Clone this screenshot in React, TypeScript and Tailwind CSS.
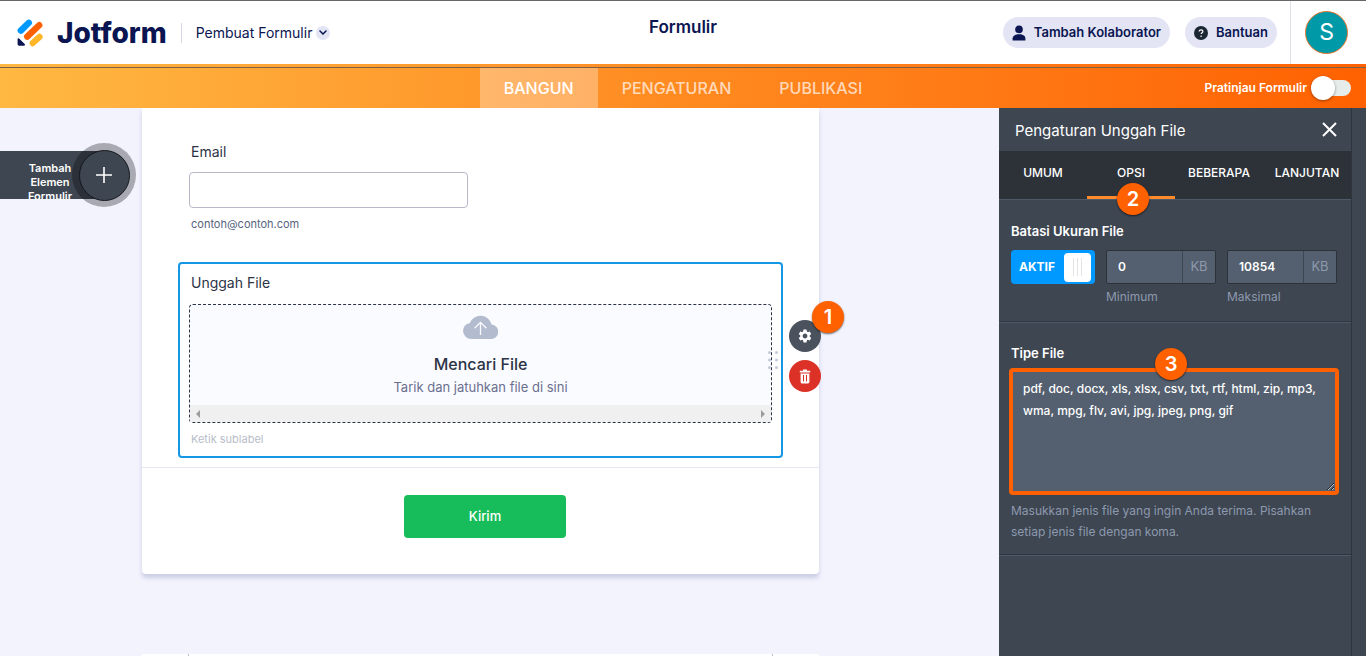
import { type ReactNode } from "react"
import clsx from "clsx"
import { MdSettings } from "react-icons/md"

const MODES = [
	{ label: "BANGUN", active: true },
	{ label: "PENGATURAN", active: false },
	{ label: "PUBLIKASI", active: false },
]

const PANEL_TABS = [
	{ label: "UMUM", active: false },
	{ label: "OPSI", active: true },
	{ label: "BEBERAPA", active: false },
	{ label: "LANJUTAN", active: false },
]

const SIZE_LIMITS = [
	{ id: "min-size", label: "Minimum", value: "0" },
	{ id: "max-size", label: "Maksimal", value: "10854" },
]

const FILE_TYPES =
	"pdf, doc, docx, xls, xlsx, csv, txt, rtf, html, zip, mp3, wma, mpg, flv, avi, jpg, jpeg, png, gif"

function LogoMark() {
	return (
		<svg viewBox="0 0 26 28" className="h-7 w-[26px]" aria-hidden="true">
			<g strokeLinecap="round" fill="none">
				<path d="M3.8 11.6 L11.8 3.8" stroke="#0099ff" strokeWidth="6.4" />
				<path d="M10.2 17.6 L22.2 6.2" stroke="#ff6100" strokeWidth="6.4" />
				<path d="M15.8 24 L22.4 18" stroke="#ffb629" strokeWidth="6.4" />
			</g>
			<path d="M.6 20.2c0-.8.9-1.2 1.5-.6l5.6 5.5c.6.6.2 1.6-.6 1.6H2.2c-.9 0-1.6-.7-1.6-1.6z" fill="#0a1551" />
		</svg>
	)
}

function CloudIcon() {
	return (
		<svg viewBox="0 0 35 24" className="h-6 w-[35px]" aria-hidden="true">
			<path
				d="M28.6 9.6A11.4 11.4 0 0 0 6.9 7.9 8.1 8.1 0 0 0 8.1 24h19.4a7.2 7.2 0 0 0 1.1-14.4z"
				fill="#b3bccf"
			/>
			<path d="M17.5 20V7.6M11.6 13.2l5.9-5.8 5.9 5.8" fill="none" stroke="#fafbff" strokeWidth="1.3" />
		</svg>
	)
}

function TrashIcon() {
	return (
		<svg viewBox="0 0 12 15" className="h-[15px] w-3" aria-hidden="true">
			<path d="M4 .6h4v1.2h3.2v1.8H.8V1.8H4z" fill="#fff" />
			<path d="M1.6 4.4h8.8V13a1.4 1.4 0 0 1-1.4 1.4H3A1.4 1.4 0 0 1 1.6 13z" fill="#fff" />
			<path d="M4.5 6v6.4M7.5 6v6.4" stroke="#db3127" strokeWidth="1" />
		</svg>
	)
}

function StepBadge({ className, children }: { className: string; children: ReactNode }) {
	return (
		<span
			className={clsx(
				"absolute z-10 flex size-8 items-center justify-center rounded-full bg-[#ff6100] text-xl font-semibold text-white shadow-[0_1px_2px_rgba(0,0,0,0.6)]",
				className,
			)}
		>
			{children}
		</span>
	)
}

function Header() {
	return (
		<header className="flex h-16 border-t border-[#666] bg-white text-[#0a1551]">
			<div className="flex flex-1 items-center">
				<a href="#" className="ml-[17px] flex items-center gap-3.5 text-[28px] leading-7 font-extrabold">
					<LogoMark />
					Jotform
				</a>
				<div className="ml-3.5 h-5 w-px bg-[#d5d6e4]" />
				<button type="button" className="ml-3.5 flex items-center gap-1 text-sm">
					Pembuat Formulir
					<span className="flex size-3.5 items-center justify-center rounded-full bg-[#e3e5f5]">
						<svg viewBox="0 0 8 5" className="h-[5px] w-2" aria-hidden="true">
							<path d="M1 1l3 3 3-3" fill="none" stroke="#0a1551" strokeWidth="1.5" strokeLinecap="round" />
						</svg>
					</span>
				</button>
			</div>
			<h1 className="pt-3 text-[17px] leading-7 font-semibold">Formulir</h1>
			<div className="flex flex-1 items-center justify-end">
				<button
					type="button"
					className="flex h-[31px] items-center gap-2 rounded-full bg-[#e3e5f5] px-[9px] text-[13px] font-semibold"
				>
					<svg viewBox="0 0 14 16" className="h-4 w-3.5" aria-hidden="true">
						<circle cx="7" cy="4.4" r="3.8" fill="#0a1551" />
						<path d="M.6 15.4v-1.8C.6 11 2.8 9.2 7 9.2s6.4 1.8 6.4 4.4v1.8z" fill="#0a1551" />
					</svg>
					Tambah Kolaborator
				</button>
				<button
					type="button"
					className="ml-[15px] flex h-[31px] items-center gap-2 rounded-full bg-[#e3e5f5] px-[9px] text-[13px] font-semibold"
				>
					<svg viewBox="0 0 14 14" className="size-3.5" aria-hidden="true">
						<circle cx="7" cy="7" r="7" fill="#1b2733" />
						<path
							d="M5.2 5.6c0-1.1.8-1.8 1.9-1.8s1.8.7 1.8 1.6c0 1.3-1.8 1.3-1.8 2.7"
							fill="none"
							stroke="#fff"
							strokeWidth="1.2"
						/>
						<circle cx="7.1" cy="10.2" r=".8" fill="#fff" />
					</svg>
					Bantuan
				</button>
				<div className="ml-[13px] flex h-full items-center border-l border-[#e0e1e8] pr-[18px] pl-3.5">
					<button
						type="button"
						className="flex size-[43px] items-center justify-center rounded-full border border-[#e8752c] bg-[#0099a8] text-[23px] text-white"
					>
						S
					</button>
				</div>
			</div>
		</header>
	)
}

function ModeBar() {
	return (
		<div className="bg-linear-to-r from-[#ffb842] via-[#ff8a20] to-[#ff6100] pt-[3px]">
			<div className="flex h-[41px] border-t border-[#7d6045]">
				<div className="flex-1" />
				<nav className="flex">
					{MODES.map((mode) => (
						<a
							key={mode.label}
							href="#"
							className={clsx(
								"flex items-center px-6 text-base font-medium",
								mode.active ? "bg-white/30 text-white" : "text-white/70",
							)}
						>
							{mode.label}
						</a>
					))}
				</nav>
				<div className="flex flex-1 items-center justify-end">
					<label className="mr-[15px] flex items-center gap-1 text-xs font-semibold text-white">
						Pratinjau Formulir
						<span className="relative flex h-6 w-10 items-center">
							<input type="checkbox" className="peer sr-only" />
							<span className="ml-2 h-4 flex-1 rounded-full bg-[#e6ecea]" />
							<span className="absolute left-0 size-6 rounded-full bg-white shadow-[0_1px_3px_rgba(0,0,0,0.4)]" />
						</span>
					</label>
				</div>
			</div>
		</div>
	)
}

function AddElement() {
	return (
		<button type="button" className="absolute top-[35px] left-0 flex h-16 w-[136px] items-center text-white">
			<span className="h-12 w-[104px] overflow-hidden bg-[#3e4652] pt-2.5 pr-1 text-[11px] leading-3.5 font-semibold">
				<span className="block w-full text-center">
					Tambah
					<br />
					Elemen
					<br />
					Formulir
				</span>
			</span>
			<span className="absolute right-0 flex size-16 items-center justify-center rounded-full bg-black/30">
				<span className="flex size-[51px] items-center justify-center rounded-full border border-[#15181c] bg-[#3e4652]">
					<svg viewBox="0 0 16 16" className="size-4" aria-hidden="true">
						<path d="M8 0v16M0 8h16" stroke="#fff" strokeWidth="1.6" />
					</svg>
				</span>
			</span>
		</button>
	)
}

function UploadField() {
	return (
		<div className="relative mt-[30px] rounded border-2 border-[#1597e5] px-[9px] py-[9px]">
			<label htmlFor="upload" className="block pl-0.5 text-sm leading-5 text-[#2c3345]">
				Unggah File
			</label>
			<div className="mt-[11px] rounded-sm border border-dashed border-[#2c3345] bg-[#fafbff]">
				<button type="button" id="upload" className="flex w-full flex-col items-center pt-2.5">
					<CloudIcon />
					<span className="mt-[13px] text-base leading-6 font-medium text-[#2c3345]">Mencari File</span>
					<span className="mt-px text-[13px] leading-5 text-[#6a6f8f]">Tarik dan jatuhkan file di sini</span>
				</button>
				<div className="mt-2 flex h-[17px] items-center justify-between bg-[#f0f0f0] px-1.5">
					<svg viewBox="0 0 4 8" className="h-2 w-1" aria-hidden="true">
						<path d="M4 0v8L0 4z" fill="#9c9c9c" />
					</svg>
					<svg viewBox="0 0 4 8" className="h-2 w-1" aria-hidden="true">
						<path d="M0 0v8l4-4z" fill="#9c9c9c" />
					</svg>
				</div>
			</div>
			<p className="mt-2 pl-0.5 text-[11px] leading-4 text-[#b8bdc9]">Ketik sublabel</p>

			<svg viewBox="0 0 10 18" className="absolute top-[87px] right-[3px] h-[18px] w-2.5" aria-hidden="true">
				{[1.5, 9, 16.5].map((y) => (
					<g key={y} fill="#c3cad8">
						<circle cx="1.5" cy={y} r="1.5" />
						<circle cx="8.5" cy={y} r="1.5" />
					</g>
				))}
			</svg>

			<div className="absolute top-14 left-full ml-2 flex flex-col gap-2">
				<button
					type="button"
					aria-label="Pengaturan"
					className="flex size-8 items-center justify-center rounded-full bg-[#4a525e] text-white"
				>
					<MdSettings className="size-4" />
				</button>
				<button
					type="button"
					aria-label="Hapus"
					className="flex size-8 items-center justify-center rounded-full bg-[#db3127]"
				>
					<TrashIcon />
				</button>
				<StepBadge className="-top-[19px] left-[23px]">1</StepBadge>
			</div>
		</div>
	)
}

function Canvas() {
	return (
		<main className="relative flex flex-1 flex-col bg-[#f3f3fe] pr-[180px] pl-[142px]">
			<AddElement />
			<form className="rounded-b bg-white shadow-[0_4px_4px_rgba(84,95,150,0.25)]">
				<div className="px-9 pt-[34px]">
					<div className="px-[11px]">
						<label htmlFor="email" className="block pl-0.5 text-sm leading-5 text-[#2c3345]">
							Email
						</label>
						<input
							id="email"
							type="email"
							className="mt-2.5 block h-9 w-[279px] rounded-sm border border-[#b8b8c8] bg-white px-2"
						/>
						<p className="mt-2 pl-0.5 text-[11px] leading-4 text-[#57647e]">contoh@contoh.com</p>
					</div>
					<UploadField />
				</div>
				<div className="mt-[9px] flex justify-center border-t border-[#e6e6ee] pt-[27px] pb-9 pl-[9px]">
					<button
						type="button"
						className="h-[43px] w-[162px] rounded-sm bg-[#18bd5b] text-[13px] font-medium text-white"
					>
						Kirim
					</button>
				</div>
			</form>
			<div className="mt-20 flex min-h-0.5 flex-1 bg-white px-[46px]">
				<div className="flex-1 border-x border-[#b8b8c8]" />
			</div>
		</main>
	)
}

function SettingsPanel() {
	return (
		<aside className="flex w-[367px] shrink-0 flex-col bg-[#3e4652] pr-3.5 text-white">
			<div className="flex-1 border-r border-[#2f353e]">
				<div className="flex h-[43px] items-center justify-between pr-3.5 pl-4">
					<h2 className="pt-[3px] text-[15px]">Pengaturan Unggah File</h2>
					<button type="button" aria-label="Tutup">
						<svg viewBox="0 0 15 15" className="size-[15px]" aria-hidden="true">
							<path d="M1 1l13 13M14 1L1 14" stroke="#fff" strokeWidth="2" />
						</svg>
					</button>
				</div>

				<nav className="relative grid h-12 grid-cols-4 bg-[#2d3239]">
					{PANEL_TABS.map((tab) => (
						<a
							key={tab.label}
							href="#"
							className={clsx(
								"border-b-3 pt-3 text-center text-xs leading-5 font-medium",
								tab.active ? "border-[#ff8a2b]" : "border-transparent",
							)}
						>
							{tab.label}
						</a>
					))}
					<StepBadge className="top-8 left-[118px]">2</StepBadge>
				</nav>

				<section className="border-t border-b border-t-[#4f5968] border-b-[#2f353e] pt-[21px] pr-3.5 pb-[15px] pl-3">
					<h3 className="text-[13px] leading-5 font-semibold">Batasi Ukuran File</h3>
					<div className="mt-[9px] flex gap-[11px]">
						<label className="flex h-[34px] w-[84px] shrink-0 items-center justify-between rounded bg-[#0099ff] pr-1 pl-2 text-xs font-bold">
							<input type="checkbox" defaultChecked className="sr-only" />
							AKTIF
							<span className="flex h-[29px] w-[27px] items-center justify-center gap-[3px] rounded-sm bg-white">
								<span className="h-[18px] w-px bg-[#e4e4e4]" />
								<span className="h-[18px] w-px bg-[#e4e4e4]" />
								<span className="h-[18px] w-px bg-[#e4e4e4]" />
							</span>
						</label>
						{SIZE_LIMITS.map((limit) => (
							<div key={limit.id} className="min-w-0 flex-1">
								<div className="flex h-[34px] rounded-xs border border-[#2d3239] bg-[#545f6f]">
									<input
										id={limit.id}
										type="text"
										defaultValue={limit.value}
										className="min-w-0 flex-1 pl-[11px] text-xs font-semibold"
									/>
									<span className="flex w-[33px] items-center justify-center border-l border-[#3e4652] text-[13px] text-[#8d99ad]">
										KB
									</span>
								</div>
								<label htmlFor={limit.id} className="mt-1 block text-xs leading-[18px] text-[#8d99ad]">
									{limit.label}
								</label>
							</div>
						))}
					</div>
				</section>

				<section className="border-t border-b border-t-[#4f5968] border-b-[#2f353e] pt-5 pr-3.5 pb-3 pl-3">
					<label htmlFor="file-types" className="block text-[13px] leading-5 font-semibold">
						Tipe File
					</label>
					<div className="relative mt-[7px]">
						<textarea
							id="file-types"
							defaultValue={FILE_TYPES}
							className="block h-[123px] w-full rounded-xs border-2 border-[#ff6100] bg-[#545f6f] px-2.5 py-1.5 text-xs leading-[22px] font-medium ring-2 ring-[#ff6100]"
						/>
						<StepBadge className="-top-[22px] left-36">3</StepBadge>
					</div>
					<p className="mt-[7px] text-xs leading-[21px] text-[#8d99ad]">
						Masukkan jenis file yang ingin Anda terima. Pisahkan setiap jenis file dengan koma.
					</p>
				</section>
				<div className="border-t border-[#4f5968]" />
			</div>
		</aside>
	)
}

export default function App() {
	return (
		<div className="flex min-h-screen flex-col font-['Inter',sans-serif]">
			<Header />
			<ModeBar />
			<div className="flex flex-1">
				<Canvas />
				<SettingsPanel />
			</div>
		</div>
	)
}
